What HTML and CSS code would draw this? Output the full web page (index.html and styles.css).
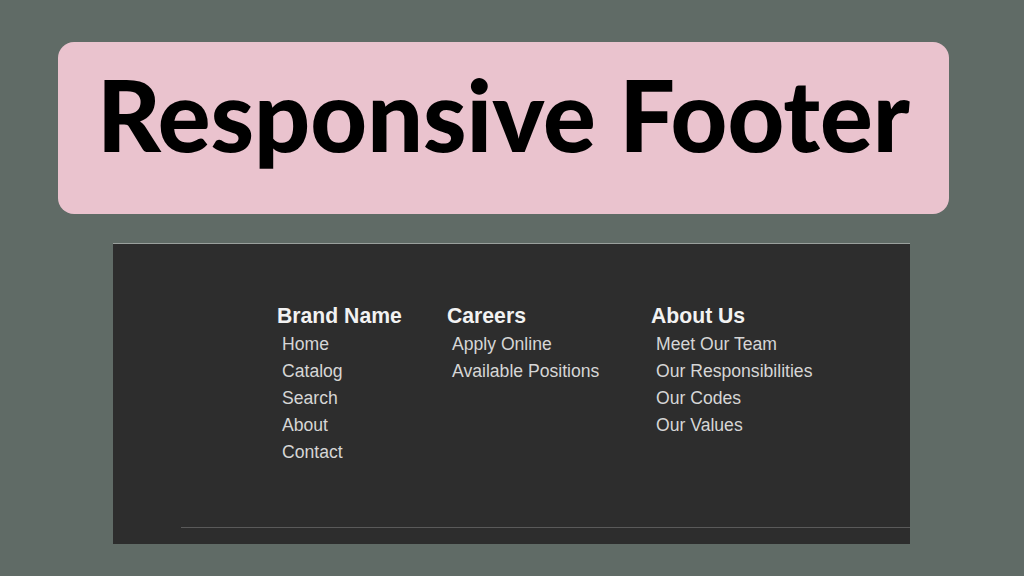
FILE: index.html
```html
<!DOCTYPE html>
<html>
<head>
<meta charset="utf-8">
<link rel="stylesheet" href="styles.css">
</head>
<body>
<div class="page">
  <div class="banner"><h1 class="title">Responsive Footer</h1></div>
  <footer class="footer">
    <div class="columns">
      <div class="col col-brand">
        <h3 class="col-title">Brand Name</h3>
        <ul class="links">
          <li>Home</li>
          <li>Catalog</li>
          <li>Search</li>
          <li>About</li>
          <li>Contact</li>
        </ul>
      </div>
      <div class="col col-careers">
        <h3 class="col-title">Careers</h3>
        <ul class="links">
          <li>Apply Online</li>
          <li>Available Positions</li>
        </ul>
      </div>
      <div class="col col-about">
        <h3 class="col-title">About Us</h3>
        <ul class="links">
          <li>Meet Our Team</li>
          <li>Our Responsibilities</li>
          <li>Our Codes</li>
          <li>Our Values</li>
        </ul>
      </div>
    </div>
    <div class="rule"></div>
  </footer>
</div>
</body>
</html>
```
FILE: styles.css
```css
html, body {
  margin: 0;
  padding: 0;
  background: #606b66;
  width: 1024px;
  height: 576px;
  overflow: hidden;
}
.page {
  display: flex;
  flex-direction: column;
  padding: 42px 0 0 58px;
}
.banner {
  width: 891px;
  height: 172px;
  background: #eac3ce;
  border-radius: 16px;
  display: flex;
  align-items: center;
  justify-content: center;
}
.title {
  margin: 0;
  font-family: Lato, "Noto Sans", sans-serif;
  font-weight: 900;
  font-size: 98.5px;
  color: #000;
  letter-spacing: 0;
  line-height: 1;
  padding-bottom: 28px;
}
.footer {
  margin: 29px 0 0 55px;
  width: 797px;
  height: 301px;
  background: #2d2d2d;
  border-top: 1px solid #9aa09d;
  box-sizing: border-box;
  display: flex;
  flex-direction: column;
  font-family: "Liberation Sans", Arial, sans-serif;
}
.columns {
  display: flex;
  padding: 60px 0 0 164px;
  flex: 1;
}
.col-brand { width: 170px; }
.col-careers { width: 204px; }
.col-title {
  margin: 0 0 3px;
  font-size: 21.2px;
  font-weight: bold;
  color: #f2f2f2;
  line-height: 24px;
}
.links {
  list-style: none;
  margin: 0;
  padding: 0 0 0 5px;
}
.links li {
  font-size: 17.6px;
  line-height: 27px;
  color: #d6d6d6;
}
.rule {
  margin: 0 0 16px 68px;
  height: 1px;
  background: #5a5a5a;
}
```
